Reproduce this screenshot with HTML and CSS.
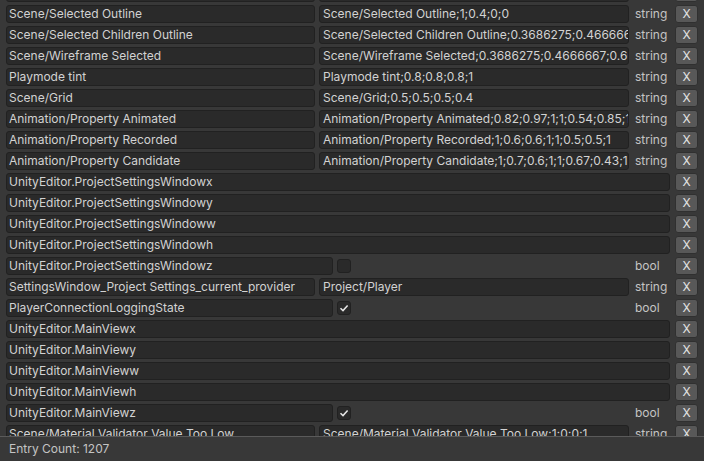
FILE: index.html
```html
<!DOCTYPE html>
<html>
<head>
<meta charset="utf-8">
<link rel="stylesheet" href="styles.css">
</head>
<body>
<div class="window">
  <div class="viewport">
    <div class="list">
      <div class="row"><div class="field key">Scene/Selection Wireframe Outline Top</div><div class="field value">Scene/Selection Wireframe;0.4;0.4;0.4;1</div><div class="end"><span class="type">string</span><span class="x">X</span></div></div>
      <div class="row"><div class="field key">Scene/Selected Outline</div><div class="field value">Scene/Selected Outline;1;0.4;0;0</div><div class="end"><span class="type">string</span><span class="x">X</span></div></div>
      <div class="row"><div class="field key">Scene/Selected Children Outline</div><div class="field value">Scene/Selected Children Outline;0.3686275;0.4666667;0.6078432;1</div><div class="end"><span class="type">string</span><span class="x">X</span></div></div>
      <div class="row"><div class="field key">Scene/Wireframe Selected</div><div class="field value">Scene/Wireframe Selected;0.3686275;0.4666667;0.6078432;0.2509804</div><div class="end"><span class="type">string</span><span class="x">X</span></div></div>
      <div class="row"><div class="field key">Playmode tint</div><div class="field value">Playmode tint;0.8;0.8;0.8;1</div><div class="end"><span class="type">string</span><span class="x">X</span></div></div>
      <div class="row"><div class="field key">Scene/Grid</div><div class="field value">Scene/Grid;0.5;0.5;0.5;0.4</div><div class="end"><span class="type">string</span><span class="x">X</span></div></div>
      <div class="row"><div class="field key">Animation/Property Animated</div><div class="field value">Animation/Property Animated;0.82;0.97;1;1;0.54;0.85;1;1</div><div class="end"><span class="type">string</span><span class="x">X</span></div></div>
      <div class="row"><div class="field key">Animation/Property Recorded</div><div class="field value">Animation/Property Recorded;1;0.6;0.6;1;1;0.5;0.5;1</div><div class="end"><span class="type">string</span><span class="x">X</span></div></div>
      <div class="row"><div class="field key">Animation/Property Candidate</div><div class="field value">Animation/Property Candidate;1;0.7;0.6;1;1;0.67;0.43;1</div><div class="end"><span class="type">string</span><span class="x">X</span></div></div>
      <div class="row"><div class="field key wide">UnityEditor.ProjectSettingsWindowx</div><div class="end"><span class="x">X</span></div></div>
      <div class="row"><div class="field key wide">UnityEditor.ProjectSettingsWindowy</div><div class="end"><span class="x">X</span></div></div>
      <div class="row"><div class="field key wide">UnityEditor.ProjectSettingsWindoww</div><div class="end"><span class="x">X</span></div></div>
      <div class="row"><div class="field key wide">UnityEditor.ProjectSettingsWindowh</div><div class="end"><span class="x">X</span></div></div>
      <div class="row"><div class="field key half">UnityEditor.ProjectSettingsWindowz</div><span class="check"></span><div class="end"><span class="type">bool</span><span class="x">X</span></div></div>
      <div class="row"><div class="field key">SettingsWindow_Project Settings_current_provider</div><div class="field value">Project/Player</div><div class="end"><span class="type">string</span><span class="x">X</span></div></div>
      <div class="row"><div class="field key half">PlayerConnectionLoggingState</div><span class="check on"><svg width="10" height="10" viewBox="0 0 10 10"><path d="M1.5 5.2 L4 7.6 L8.6 2.4" fill="none" stroke="#e6e6e6" stroke-width="1.5"/></svg></span><div class="end"><span class="type">bool</span><span class="x">X</span></div></div>
      <div class="row"><div class="field key wide">UnityEditor.MainViewx</div><div class="end"><span class="x">X</span></div></div>
      <div class="row"><div class="field key wide">UnityEditor.MainViewy</div><div class="end"><span class="x">X</span></div></div>
      <div class="row"><div class="field key wide">UnityEditor.MainVieww</div><div class="end"><span class="x">X</span></div></div>
      <div class="row"><div class="field key wide">UnityEditor.MainViewh</div><div class="end"><span class="x">X</span></div></div>
      <div class="row"><div class="field key half">UnityEditor.MainViewz</div><span class="check on"><svg width="10" height="10" viewBox="0 0 10 10"><path d="M1.5 5.2 L4 7.6 L8.6 2.4" fill="none" stroke="#e6e6e6" stroke-width="1.5"/></svg></span><div class="end"><span class="type">bool</span><span class="x">X</span></div></div>
      <div class="row"><div class="field key">Scene/Material Validator Value Too Low</div><div class="field value">Scene/Material Validator Value Too Low;1;0;0;1</div><div class="end"><span class="type">string</span><span class="x">X</span></div></div>
      <div class="row"><div class="field key">Scene/Material Validator Value Too High</div><div class="field value">Scene/Material Validator Value Too High;0;0;1;1</div><div class="end"><span class="type">string</span><span class="x">X</span></div></div>
    </div>
  </div>
  <div class="footer">Entry Count: 1207</div>
</div>
</body>
</html>
```
FILE: styles.css
```css
html, body {
  margin: 0;
  padding: 0;
  background: #383838;
}
body {
  font-family: Inter, "Noto Sans", sans-serif;
  font-size: 12px;
  color: #d2d2d2;
}
.window {
  width: 704px;
  height: 461px;
  display: flex;
  flex-direction: column;
  overflow: hidden;
}
.viewport {
  height: 436px;
  overflow: hidden;
  flex: none;
}
.list {
  margin-top: -16px;
  display: flex;
  flex-direction: column;
  gap: 3px;
}
.row {
  display: flex;
  align-items: center;
  height: 18px;
  padding: 0 6px;
}
.field {
  box-sizing: border-box;
  height: 18px;
  line-height: 16px;
  background: #2a2a2a;
  border: 1px solid #212121;
  border-radius: 3px;
  padding: 0 2px;
  white-space: nowrap;
  overflow: hidden;
  flex: none;
}
.key { width: 309px; }
.key.wide { width: 664px; }
.key.half { width: 327px; }
.value {
  width: 310px;
  margin-left: 4px;
  padding-left: 3px;
}
.check {
  box-sizing: border-box;
  width: 14px;
  height: 14px;
  margin-left: 4px;
  background: #2a2a2a;
  border: 1px solid #212121;
  border-radius: 3px;
  display: flex;
  align-items: center;
  justify-content: center;
  flex: none;
}
.end {
  margin-left: auto;
  display: flex;
  align-items: center;
}
.type {
  width: 35px;
  margin-right: 5px;
  color: #c4c4c4;
  line-height: 16px;
}
.x {
  box-sizing: border-box;
  width: 23px;
  height: 18px;
  background: #585858;
  border: 1px solid #303030;
  border-radius: 3px;
  text-align: center;
  line-height: 16px;
  color: #e4e4e4;
  font-size: 12px;
}
.footer {
  flex: 1;
  border-top: 1px solid #5a5a5a;
  background: #383838;
  padding-left: 9px;
  line-height: 24px;
  color: #c4c4c4;
}
```
